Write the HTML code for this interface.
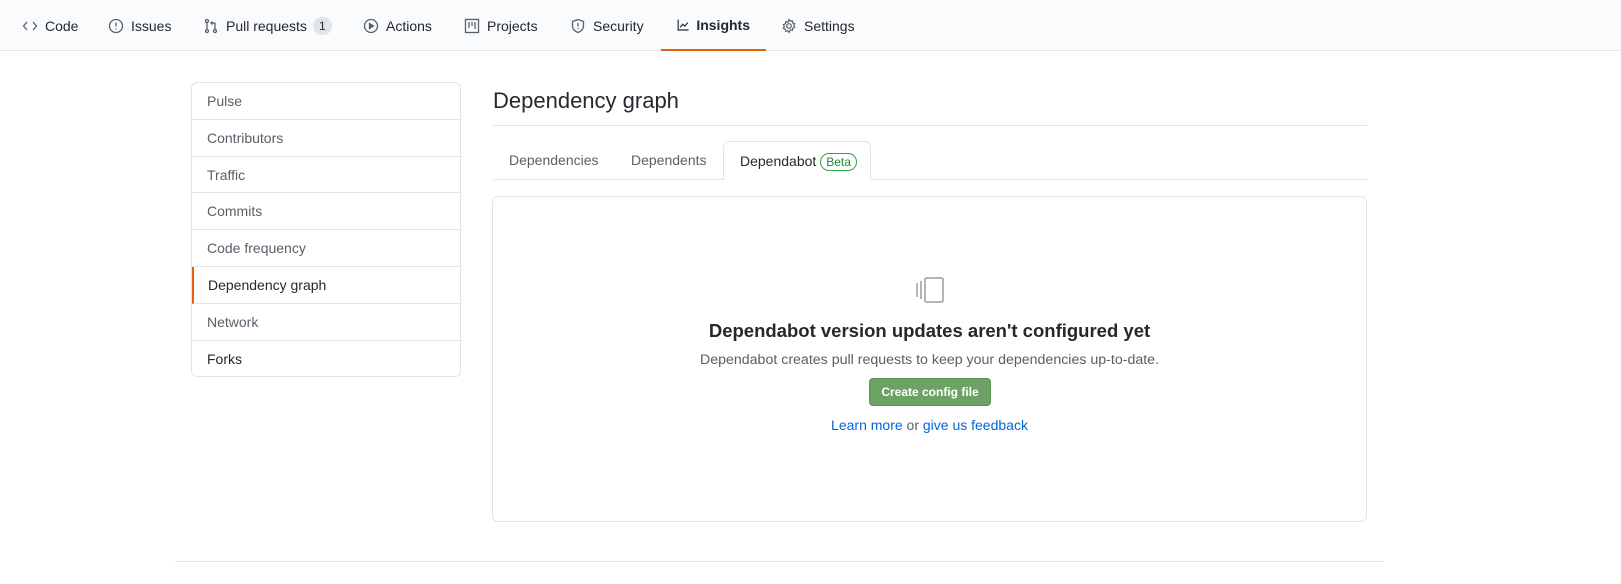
<!DOCTYPE html>
<html><head><style>
*{box-sizing:border-box;margin:0;padding:0}
body{width:1621px;height:584px;background:#fff;font-family:"Liberation Sans",sans-serif;color:#24292e;position:relative;overflow:hidden;font-size:14px}
.top{position:absolute;left:0;top:0;width:1621px;height:51px;background:#fafbfc;border-bottom:1px solid #e1e4e8}
.tab{position:absolute;top:0;height:51px;display:flex;align-items:center;font-size:14px;color:#24292e}
.tab svg{margin-right:7px}
.cnt{display:inline-block;background:#e1e4e8;border-radius:10px;font-size:12px;padding:2px 6px;margin-left:6px}
.sel{border-bottom:2px solid #e36209;font-weight:bold;padding:0 16px;left:661px;width:105px}
.side{position:absolute;left:191px;top:82px;width:270px;height:295px;border:1px solid #e1e4e8;border-radius:6px}
.side div{height:36.8px;border-bottom:1px solid #e1e4e8;padding-left:15px;line-height:36px;font-size:14px;color:#586069}
.side div:last-child{border-bottom:none}
.side .on{border-left:2px solid #e36209;padding-left:14px;color:#24292e}
h2{position:absolute;left:493px;top:88px;font-size:22px;font-weight:normal}
.hr{position:absolute;left:493px;top:125px;width:874px;border-top:1px solid #e1e4e8}
.tabs{position:absolute;left:493px;top:179px;width:874px;border-top:1px solid #e1e4e8}
.t{position:absolute;top:152px;font-size:14px;color:#586069}
.act{position:absolute;left:723px;top:141px;width:148px;height:39px;border:1px solid #e1e4e8;border-bottom:none;border-radius:6px 6px 0 0;background:#fff;padding:11px 0 0 16px;font-size:14px}
.beta{display:inline-block;border:1px solid #28a745;color:#22863a;border-radius:10px;font-size:12px;padding:1px 5px;line-height:14px}
.box{position:absolute;left:492px;top:196px;width:875px;height:326px;border:1px solid #e1e4e8;border-radius:6px;text-align:center}
.box h3{position:absolute;top:123px;width:100%;font-size:18.5px}
.box p{position:absolute;top:155px;width:100%;color:#586069;font-size:14.2px}
.btn{position:absolute;left:376px;top:181px;width:122px;height:28px;background:#6ca264;border:1px solid #5c9355;border-radius:4px;color:#fff;font-weight:bold;font-size:12px;line-height:26px}
.lk{position:absolute;top:220px;width:100%;font-size:14px;color:#586069}
.lk a{color:#0366d6;text-decoration:none}
.foot{position:absolute;left:175px;top:561px;width:1208px;border-top:1px solid #e1e4e8}
</style></head><body>
<div class="top">
<div class="tab" style="left:22px"><svg width="16" height="16" viewBox="0 0 16 16" fill="none" stroke="#586069" stroke-width="1.3"><path d="M5 4L1.5 8 5 12M11 4l3.5 4-3.5 4"/></svg>Code</div>
<div class="tab" style="left:108px"><svg width="16" height="16" viewBox="0 0 16 16" fill="none" stroke="#586069" stroke-width="1.3"><circle cx="8" cy="8" r="6.5"/><path d="M8 4.5v4M8 10.5v1"/></svg>Issues</div>
<div class="tab" style="left:203px"><svg width="16" height="16" viewBox="0 0 16 16" fill="none" stroke="#586069" stroke-width="1.3"><circle cx="4" cy="3" r="1.5"/><circle cx="4" cy="13" r="1.5"/><circle cx="12" cy="13" r="1.5"/><path d="M4 4.5v7M12 11.5V5H8M9.5 3.5L8 5l1.5 1.5"/></svg>Pull requests<span class="cnt">1</span></div>
<div class="tab" style="left:363px"><svg width="16" height="16" viewBox="0 0 16 16" fill="none" stroke="#586069" stroke-width="1.3"><circle cx="8" cy="8" r="6.5"/><path d="M6.5 5.5v5l4-2.5z" fill="#586069"/></svg>Actions</div>
<div class="tab" style="left:464px"><svg width="16" height="16" viewBox="0 0 16 16" fill="none" stroke="#586069" stroke-width="1.3"><rect x="1.5" y="1.5" width="13" height="13"/><path d="M5 4v6M8 4v4M11 4v7"/></svg>Projects</div>
<div class="tab" style="left:570px"><svg width="16" height="16" viewBox="0 0 16 16" fill="none" stroke="#586069" stroke-width="1.3"><path d="M8 1.5l5.5 2v4.5c0 3.5-3 5.5-5.5 6.5C5.5 13.5 2.5 11.5 2.5 8V3.5z"/><path d="M8 5v3.5M8 10v1"/></svg>Security</div>
<div class="tab sel"><svg width="16" height="16" viewBox="0 0 16 16" fill="none" stroke="#24292e" stroke-width="1.5"><path d="M1.5 1v13.5H15M4 11l3.5-4 2.5 2.5L14 5"/></svg>Insights</div>
<div class="tab" style="left:781px"><svg width="16" height="16" viewBox="0 0 16 16" fill="none" stroke="#586069" stroke-width="1.2"><circle cx="8" cy="8" r="2.3"/><path d="M8 1.5l1.2 1.8 2-.6.4 2.1 2 .8-.9 1.9 1 1.8-2 .9-.3 2.1-2.1-.5L8 14.5l-1.3-1.7-2.1.5-.3-2.1-2-.9 1-1.8-.9-1.9 2-.8.4-2.1 2 .6z"/></svg>Settings</div>
</div>
<div class="side">
<div>Pulse</div><div>Contributors</div><div>Traffic</div><div>Commits</div><div>Code frequency</div><div class="on">Dependency graph</div><div>Network</div><div style="color:#24292e">Forks</div>
</div>
<h2>Dependency graph</h2>
<div class="hr"></div>
<div class="tabs"></div>
<div class="t" style="left:509px">Dependencies</div>
<div class="t" style="left:631px">Dependents</div>
<div class="act">Dependabot <span class="beta">Beta</span></div>
<div class="box">
<svg style="position:absolute;left:420px;top:80px" width="34" height="28" viewBox="0 0 34 28" fill="none" stroke="#959da5" stroke-width="1.5"><rect x="12" y="1" width="18" height="24" rx="1.5"/><path d="M8 4v18M4 6v14"/></svg>
<h3>Dependabot version updates aren't configured yet</h3>
<p>Dependabot creates pull requests to keep your dependencies up-to-date.</p>
<div class="btn">Create config file</div>
<div class="lk"><a>Learn more</a> or <a>give us feedback</a></div>
</div>
<div class="foot"></div>
</body></html>
